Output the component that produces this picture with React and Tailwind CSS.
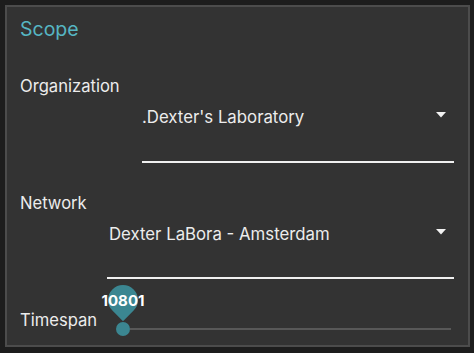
import React from "react";

function Arrow() {
  return (
    <svg width="10" height="6" viewBox="0 0 10 6" className="block">
      <path d="M0 0 L10 0 L5 5.5 Z" fill="#f2f2f2" />
    </svg>
  );
}

function Select({ value, ml, w, pl, pb }) {
  return (
    <div className={`${ml} ${w} ${pb} mt-[9px] border-b-2 border-[#f0f0f0] pr-[8px] flex items-start justify-between`}>
      <span className={`${pl} text-[16.8px] leading-[22px] text-[#ececec]`}>{value}</span>
      <span className="mt-[6px]"><Arrow /></span>
    </div>
  );
}

export default function App() {
  return (
    <div
      className="w-[474px] h-[353px] bg-[#1d1d1d] pt-[5px] pl-[5px] overflow-hidden"
      style={{ fontFamily: "Inter, 'Noto Sans', sans-serif" }}
    >
      <div className="w-[465px] h-[342px] border-2 border-[#4c4c4c] bg-[#333333] px-[13px] flex flex-col">
        <div className="mt-[10px] text-[19.5px] leading-[24px] text-[#56b6c3]">Scope</div>
        <div className="mt-[34px] text-[16.6px] leading-[22px] text-[#ececec]">Organization</div>
        <Select value=".Dexter's Laboratory" ml="ml-[122px]" w="w-[312px]" pl="pl-0" pb="pb-[33px]" />
        <div className="mt-[29px] text-[16.6px] leading-[22px] text-[#ececec]">Network</div>
        <Select value="Dexter LaBora - Amsterdam" ml="ml-[87px]" w="w-[347px]" pl="pl-[2px]" pb="pb-[32px]" />
        <div className="mt-[30px] flex">
          <div className="w-[96px] text-[16.6px] leading-[22px] text-[#ececec]">Timespan</div>
          <div className="relative w-[335px] h-[22px]">
            <div className="absolute left-[14px] right-0 top-[19px] h-[2px] bg-[#585858]" />
            <div className="absolute left-0 top-[13px] w-[14px] h-[14px] rounded-full bg-[#3b8691]" />
            <div className="absolute left-[-8px] top-[-24px] w-[30px] h-[30px] rotate-45 rounded-[50%_50%_0_50%] bg-[#3b8691]" />
            <div className="absolute left-[-22px] top-[-18px] w-[58px] text-center text-[15px] leading-[20px] font-bold text-white">10801</div>
          </div>
        </div>
      </div>
    </div>
  );
}
